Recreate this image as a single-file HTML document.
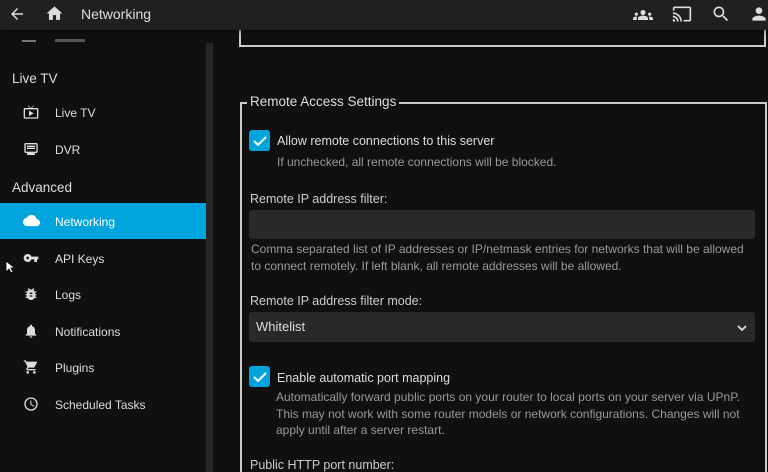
<!DOCTYPE html>
<html><head><meta charset="utf-8"><style>
*{box-sizing:border-box;margin:0;padding:0}
html,body{width:768px;height:472px;overflow:hidden}
body{background:#101010;font-family:"Liberation Sans",sans-serif;color:#ddd;position:relative}
.hdr{position:absolute;left:0;top:0;width:768px;height:30px;background:#202020;box-shadow:0 1px 6px rgba(0,0,0,.6);z-index:5}
.t{position:absolute;white-space:nowrap}
.side{position:absolute;left:0;top:30px;width:208px;height:442px;background:#101010;overflow:hidden}
.sec{position:absolute;left:12px;font-size:13.5px;color:#ddd}
.it{position:absolute;left:55px;font-size:12px;color:#ddd}
.ic{position:absolute;left:23px}
.sb{position:absolute;left:206px;top:43px;width:7px;height:429px;background:#262626}
.lbl{position:absolute;left:250px;font-size:12px;color:#ccc}
.hlp{position:absolute;font-size:12px;color:#999;line-height:17px}
.cb{position:absolute;left:249px;width:21px;height:21px;background:#00a4dc;border-radius:3px}
</style></head><body>
<div class="hdr">
<svg class="t" style="left:8px;top:5px" width="18" height="18" viewBox="0 0 24 24"><path d="M20 11H7.8l5.6-5.6L12 4l-8 8 8 8 1.4-1.4L7.8 13H20z" fill="#ddd"/></svg>
<svg class="t" style="left:45px;top:4px" width="19" height="19" viewBox="0 0 24 24"><path d="M10 20v-6h4v6h5v-8h3L12 3 2 12h3v8z" fill="#ddd"/></svg>
<div class="t" style="left:81px;top:6px;font-size:14px;color:#ddd">Networking</div>
<svg class="t" style="left:633px;top:5px" width="20" height="20" viewBox="0 0 24 24"><path d="M12 12.75c1.63 0 3.07.39 4.24.9 1.08.48 1.76 1.56 1.76 2.730V18H6v-1.61c0-1.18.68-2.26 1.76-2.73 1.17-.52 2.610-.91 4.24-.91zM4 13c1.1 0 2-.9 2-2s-.9-2-2-2-2 .9-2 2 .9 2 2 2zm1.13 1.1c-.37-.06-.74-.1-1.13-.1-.99 0-1.93.21-2.78.58A2 2 0 0 0 0 16.43V18h4.5v-1.61c0-.83.23-1.61.63-2.29zM20 13c1.1 0 2-.9 2-2s-.9-2-2-2-2 .9-2 2 .9 2 2 2zm4 3.43c0-.81-.48-1.53-1.22-1.85A6.95 6.95 0 0 0 20 14c-.39 0-.76.04-1.13.1.4.68.63 1.46.63 2.29V18H24v-1.57zM12 6c1.66 0 3 1.34 3 3s-1.34 3-3 3-3-1.34-3-3 1.34-3 3-3z" fill="#ddd"/></svg>
<svg class="t" style="left:672px;top:4px" width="20" height="20" viewBox="0 0 24 24"><path d="M21 3H3c-1.1 0-2 .9-2 2v3h2V5h18v14h-7v2h7c1.1 0 2-.9 2-2V5c0-1.1-.9-2-2-2zM1 18v3h3c0-1.660-1.34-3-3-3zm0-4v2c2.76 0 5 2.24 5 5h2c0-3.87-3.13-7-7-7zm0-4v2a9 9 0 0 1 9 9h2c0-6.08-4.93-11-11-11z" fill="#ddd"/></svg>
<svg class="t" style="left:711px;top:4px" width="20" height="20" viewBox="0 0 24 24"><path d="M15.5 14h-.79l-.28-.27A6.47 6.47 0 0 0 16 9.5 6.5 6.5 0 1 0 9.5 16c1.61 0 3.09-.59 4.23-1.57l.27.28v.79l5 4.99L20.49 19l-4.99-5zm-6 0C7.01 14 5 11.99 5 9.5S7.01 5 9.5 5 14 7.01 14 9.5 11.99 14 9.5 14z" fill="#ddd"/></svg>
<svg class="t" style="left:749px;top:4px" width="20" height="20" viewBox="0 0 24 24"><path d="M12 12c2.21 0 4-1.79 4-4s-1.79-4-4-4-4 1.79-4 4 1.79 4 4 4zm0 2c-2.67 0-8 1.34-8 4v2h16v-2c0-2.66-5.33-4-8-4z" fill="#ddd"/></svg>
</div>
<div class="side">
<div class="t" style="left:22px;top:10px;width:14px;height:2px;background:#777"></div>
<div class="t" style="left:55px;top:9px;width:30px;height:3px;background:#555"></div>
<div class="sec" style="top:41px">Live TV</div>
<svg class="ic" style="top:74px" width="16" height="16" viewBox="0 0 24 24"><path d="M21 6h-7.59l3.29-3.29L16 2l-4 4-4-4-.71.71L10.59 6H3a2 2 0 0 0-2 2v12a2 2 0 0 0 2 2h18a2 2 0 0 0 2-2V8a2 2 0 0 0-2-2zm0 14H3V8h18v12zM9 10v8l7-4z" fill="#ddd"/></svg>
<div class="it" style="top:76px">Live TV</div>
<svg class="ic" style="top:111px" width="16" height="16" viewBox="0 0 24 24"><path d="M20 3H4c-1.1 0-2 .9-2 2v11c0 1.1.9 2 2 2h3l-1 1v2h12v-2l-1-1h3c1.1 0 2-.9 2-2V5c0-1.1-.9-2-2-2zm0 13H4V5h16v11zM6 7h12v2H6zm0 3h12v2H6z" fill="#ddd"/></svg>
<div class="it" style="top:113px">DVR</div>
<div class="sec" style="top:150px">Advanced</div>
<div class="t" style="left:0;top:173px;width:208px;height:36px;background:#00a4dc"></div>
<svg class="ic" style="top:182px" width="17" height="17" viewBox="0 0 24 24"><path d="M19.35 10.04A7.49 7.49 0 0 0 12 4C9.11 4 6.6 5.64 5.35 8.04A5.99 5.99 0 0 0 0 14c0 3.31 2.69 6 6 6h13c2.76 0 5-2.24 5-5 0-2.64-2.05-4.78-4.65-4.96z" fill="#fff"/></svg>
<div class="it" style="top:185px;color:#fff">Networking</div>
<svg class="ic" style="top:220px" width="16" height="16" viewBox="0 0 24 24"><path d="M12.65 10A6 6 0 0 0 1 12a6 6 0 0 0 11.65 2H17v4h4v-4h2v-4H12.65zM7 14c-1.1 0-2-.9-2-2s.9-2 2-2 2 .9 2 2-.9 2-2 2z" fill="#ddd"/></svg>
<div class="it" style="top:222px">API Keys</div>
<svg class="ic" style="top:256px" width="16" height="16" viewBox="0 0 24 24"><path d="M20 8h-2.81a5.98 5.98 0 0 0-1.82-1.96L17 4.41 15.59 3l-2.17 2.17a6 6 0 0 0-2.83 0L8.41 3 7 4.41l1.62 1.63C7.88 6.55 7.26 7.22 6.81 8H4v2h2.09c-.05.33-.09.66-.09 1v1H4v2h2v1c0 .34.04.67.09 1H4v2h2.81a5.99 5.99 0 0 0 10.38 0H20v-2h-2.09c.05-.33.09-.66.09-1v-1h2v-2h-2v-1c0-.34-.04-.67-.09-1H20V8zm-6 8h-4v-2h4v2zm0-4h-4v-2h4v2z" fill="#ddd"/></svg>
<div class="it" style="top:258px">Logs</div>
<svg class="ic" style="top:293px" width="16" height="16" viewBox="0 0 24 24"><path d="M12 22c1.1 0 2-.9 2-2h-4a2 2 0 0 0 2 2zm6-6v-5c0-3.07-1.64-5.64-4.5-6.32V4c0-.83-.67-1.5-1.5-1.5s-1.5.67-1.5 1.5v.68C7.63 5.36 6 7.920 6 11v5l-2 2v1h16v-1l-2-2z" fill="#ddd"/></svg>
<div class="it" style="top:295px">Notifications</div>
<svg class="ic" style="top:329px" width="16" height="16" viewBox="0 0 24 24"><path d="M7 18c-1.1 0-1.99.9-1.99 2S5.9 22 7 22s2-.9 2-2-.9-2-2-2zM1 2v2h2l3.6 7.59-1.35 2.45c-.16.28-.25.61-.25.96 0 1.1.9 2 2 2h12v-2H7.42a.25.25 0 0 1-.25-.25l.03-.12.9-1.63h7.45c.75 0 1.41-.41 1.75-1.03l3.58-6.49A1 1 0 0 0 20 4H5.21l-.94-2H1zm16 16c-1.1 0-1.99.9-1.99 2s.89 2 1.99 2 2-.9 2-2-.9-2-2-2z" fill="#ddd"/></svg>
<div class="it" style="top:331px">Plugins</div>
<svg class="ic" style="top:366px" width="16" height="16" viewBox="0 0 24 24"><path d="M12 2a10 10 0 1 0 0 20 10 10 0 0 0 0-20zm0 18a8 8 0 1 1 0-16 8 8 0 0 1 0 16zm.5-13H11v6l5.25 3.15.75-1.23-4.5-2.67z" fill="#ddd"/></svg>
<div class="it" style="top:368px">Scheduled Tasks</div>
</div>
<div class="sb"></div>
<svg class="t" style="left:5px;top:260px" width="10" height="15" viewBox="0 0 10 15"><path d="M1 1v11l3-3 2 4 2-1-2-4h4z" fill="#fff" stroke="#000" stroke-width=".8"/></svg>
<div class="t" style="left:239px;top:20px;width:527px;height:27px;border:2px solid #ccc;border-top:none"></div>
<div class="t" style="left:240px;top:102px;width:527px;height:390px;border:2px solid #ccc"></div>
<div class="t" style="left:247px;top:94px;padding:0 3px;background:#101010;font-size:13.5px;color:#ddd">Remote Access Settings</div>
<div class="cb" style="top:130px"><svg width="21" height="21" viewBox="0 0 21 21"><path d="M5 11l4 4 8-8" stroke="#fff" stroke-width="2" fill="none"/></svg></div>
<div class="t" style="left:277px;top:134px;font-size:12.5px;color:#ddd">Allow remote connections to this server</div>
<div class="hlp" style="left:277px;top:154px">If unchecked, all remote connections will be blocked.</div>
<div class="lbl" style="top:192px;font-size:12.5px">Remote IP address filter:</div>
<div class="t" style="left:249px;top:210px;width:506px;height:29px;background:#292929;border-radius:3px"></div>
<div class="hlp" style="left:251px;top:241px;width:510px">Comma separated list of IP addresses or IP/netmask entries for networks that will be allowed<br>to connect remotely. If left blank, all remote addresses will be allowed.</div>
<div class="lbl" style="top:294px;font-size:12.5px">Remote IP address filter mode:</div>
<div class="t" style="left:249px;top:312px;width:506px;height:30px;background:#292929;border-radius:3px"></div>
<div class="t" style="left:256px;top:319px;font-size:13px;color:#ddd">Whitelist</div>
<svg class="t" style="left:736px;top:322px" width="12" height="12" viewBox="0 0 12 12"><path d="M2 4l4 4 4-4" stroke="#ddd" stroke-width="1.8" fill="none"/></svg>
<div class="cb" style="top:366px"><svg width="21" height="21" viewBox="0 0 21 21"><path d="M5 11l4 4 8-8" stroke="#fff" stroke-width="2" fill="none"/></svg></div>
<div class="t" style="left:277px;top:371px;font-size:12.5px;color:#ddd">Enable automatic port mapping</div>
<div class="hlp" style="left:276px;top:389px;width:490px;line-height:16.5px">Automatically forward public ports on your router to local ports on your server via UPnP.<br>This may not work with some router models or network configurations. Changes will not<br>apply until after a server restart.</div>
<div class="lbl" style="top:458px;font-size:12.5px">Public HTTP port number:</div>
</body></html>
